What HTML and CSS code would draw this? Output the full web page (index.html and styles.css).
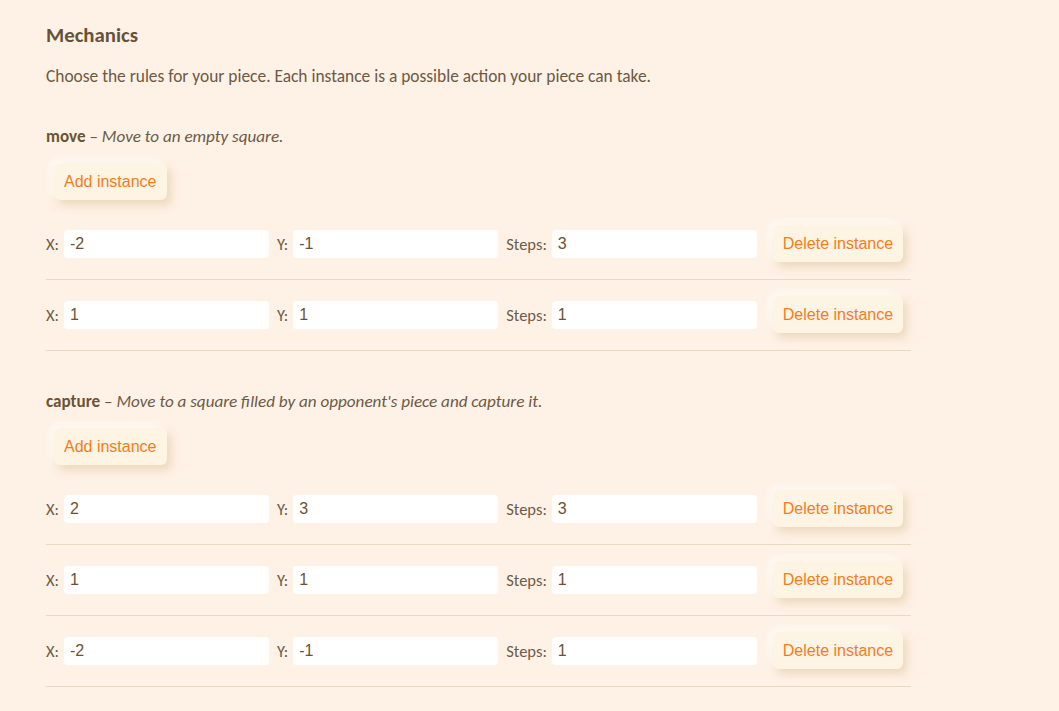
FILE: index.html
```html
<!DOCTYPE html>
<html lang="en">
<head>
<meta charset="utf-8">
<title>Mechanics</title>
<link rel="stylesheet" href="styles.css">
</head>
<body>
<main class="page">
  <h2 class="title">Mechanics</h2>
  <p class="intro">Choose the rules for your piece. Each instance is a possible action your piece can take.</p>

  <section class="mechanic">
    <p class="desc"><b>move</b> – <i>Move to an empty square.</i></p>
    <button class="btn add">Add instance</button>
    <div class="instance">
      <label class="lbl">X:</label><input class="field" value="-2">
      <label class="lbl">Y:</label><input class="field" value="-1">
      <label class="lbl">Steps:</label><input class="field" value="3">
      <button class="btn del">Delete instance</button>
    </div>
    <div class="instance">
      <label class="lbl">X:</label><input class="field" value="1">
      <label class="lbl">Y:</label><input class="field" value="1">
      <label class="lbl">Steps:</label><input class="field" value="1">
      <button class="btn del">Delete instance</button>
    </div>
  </section>

  <section class="mechanic">
    <p class="desc"><b>capture</b> – <i>Move to a square filled by an opponent's piece and capture it.</i></p>
    <button class="btn add">Add instance</button>
    <div class="instance">
      <label class="lbl">X:</label><input class="field" value="2">
      <label class="lbl">Y:</label><input class="field" value="3">
      <label class="lbl">Steps:</label><input class="field" value="3">
      <button class="btn del">Delete instance</button>
    </div>
    <div class="instance">
      <label class="lbl">X:</label><input class="field" value="1">
      <label class="lbl">Y:</label><input class="field" value="1">
      <label class="lbl">Steps:</label><input class="field" value="1">
      <button class="btn del">Delete instance</button>
    </div>
    <div class="instance">
      <label class="lbl">X:</label><input class="field" value="-2">
      <label class="lbl">Y:</label><input class="field" value="-1">
      <label class="lbl">Steps:</label><input class="field" value="1">
      <button class="btn del">Delete instance</button>
    </div>
  </section>
</main>
</body>
</html>
```

FILE: styles.css
```css
html, body {
  margin: 0;
  background: #fef1e5;
}

body {
  font-family: "Carlito", "Lato", "Liberation Sans", sans-serif;
  color: #6b5a45;
  font-size: 17.4px;
  line-height: 24px;
}

.page {
  padding: 23px 46px;
}

.title {
  margin: 0 0 17px;
  font-size: 20.8px;
  line-height: 24px;
  font-weight: 700;
  color: #66523a;
}

.intro {
  margin: 0 0 37px;
}

.mechanic {
  margin-bottom: 39px;
}

.desc {
  margin: 0;
  font-size: 17.1px;
  color: #6b5a45;
}

.desc b {
  color: #6b5433;
}

.btn {
  font-family: "Liberation Sans", Arial, sans-serif;
  font-size: 16px;
  line-height: 19px;
  color: #f57c1e;
  background: #fef4e4;
  border: none;
  border-radius: 6px;
  padding: 9px 10px;
  box-shadow: 4px 5px 9px rgba(214, 186, 140, 0.45), -4px -4px 9px rgba(255, 255, 255, 0.75);
  cursor: pointer;
}

.add {
  display: block;
  margin: 14px 8px 9px;
}

.instance {
  display: flex;
  align-items: center;
  width: 865px;
  padding: 16px 0 17px;
  border-bottom: 1px solid #eadabd;
}

.lbl {
  color: #6d5c4a;
  font-size: 16.5px;
  margin-right: 5px;
}

.field {
  width: 205px;
  height: 28px;
  box-sizing: border-box;
  border: none;
  border-radius: 4px;
  background: #fff;
  padding: 0 6px;
  margin-right: 8px;
  font-family: "Liberation Sans", Arial, sans-serif;
  font-size: 16px;
  color: #6b5232;
  outline: none;
}

.del {
  margin-left: 8px;
  height: 37px;
}
```
